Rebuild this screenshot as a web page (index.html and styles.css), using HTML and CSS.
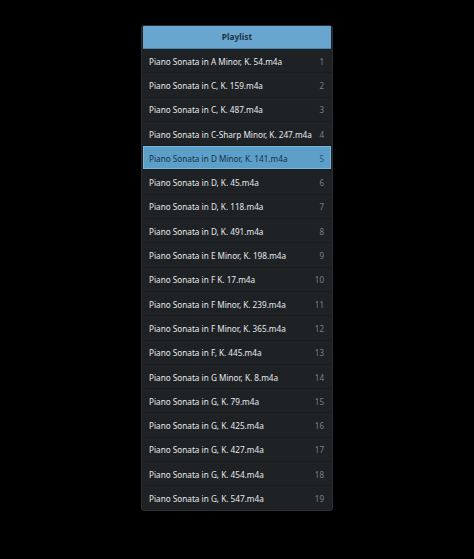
FILE: index.html
```html
<!DOCTYPE html>
<html lang="en">
<head>
  <meta charset="UTF-8" />
  <meta name="viewport" content="width=device-width, initial-scale=1.0"/>
  <title>Playlist</title>
  <link rel="stylesheet" href="styles.css">
</head>
<body>

  <!-- Playlist panel -->
  <div class="playlist">
    <div class="playlist-header">Playlist</div>
    <ul class="tracks">
      <li class="track"><span class="name">Piano Sonata in A Minor, K. 54.m4a</span><span class="num">1</span></li>
      <li class="track"><span class="name">Piano Sonata in C, K. 159.m4a</span><span class="num">2</span></li>
      <li class="track"><span class="name">Piano Sonata in C, K. 487.m4a</span><span class="num">3</span></li>
      <li class="track"><span class="name">Piano Sonata in C-Sharp Minor, K. 247.m4a</span><span class="num">4</span></li>
      <li class="track active"><span class="name">Piano Sonata in D Minor, K. 141.m4a</span><span class="num">5</span></li>
      <li class="track"><span class="name">Piano Sonata in D, K. 45.m4a</span><span class="num">6</span></li>
      <li class="track"><span class="name">Piano Sonata in D, K. 118.m4a</span><span class="num">7</span></li>
      <li class="track"><span class="name">Piano Sonata in D, K. 491.m4a</span><span class="num">8</span></li>
      <li class="track"><span class="name">Piano Sonata in E Minor, K. 198.m4a</span><span class="num">9</span></li>
      <li class="track"><span class="name">Piano Sonata in F K. 17.m4a</span><span class="num">10</span></li>
      <li class="track"><span class="name">Piano Sonata in F Minor, K. 239.m4a</span><span class="num">11</span></li>
      <li class="track"><span class="name">Piano Sonata in F Minor, K. 365.m4a</span><span class="num">12</span></li>
      <li class="track"><span class="name">Piano Sonata in F, K. 445.m4a</span><span class="num">13</span></li>
      <li class="track"><span class="name">Piano Sonata in G Minor, K. 8.m4a</span><span class="num">14</span></li>
      <li class="track"><span class="name">Piano Sonata in G, K. 79.m4a</span><span class="num">15</span></li>
      <li class="track"><span class="name">Piano Sonata in G, K. 425.m4a</span><span class="num">16</span></li>
      <li class="track"><span class="name">Piano Sonata in G, K. 427.m4a</span><span class="num">17</span></li>
      <li class="track"><span class="name">Piano Sonata in G, K. 454.m4a</span><span class="num">18</span></li>
      <li class="track"><span class="name">Piano Sonata in G, K. 547.m4a</span><span class="num">19</span></li>
    </ul>
  </div>

</body>
</html>
```

FILE: styles.css
```css
body {
  font-family: 'Noto Sans', 'Open Sans', sans-serif;
  background: #000;
  margin: 0;
  padding: 25px 0 0 141px;
  color: #e6e8ea;
}

.playlist {
  width: 190px;
  background: #1f2225;
  border: 1px solid #2c3034;
  border-radius: 3px;
  overflow: hidden;
}

.playlist-header {
  height: 22px;
  line-height: 22px;
  margin: 0 1px;
  text-align: center;
  font-size: 8.4px;
  font-weight: 700;
  color: #1d3447;
  background: #68a6cf;
  border-bottom: 1px solid #4d86ad;
}

.tracks {
  list-style: none;
  margin: 0;
  padding: 0;
}

.track {
  display: flex;
  align-items: center;
  justify-content: space-between;
  height: 22.3px;
  padding: 1px 8px 0 7px;
  font-size: 8.2px;
  white-space: nowrap;
  border-bottom: 1px solid #191b1e;
}

.track:last-child {
  border-bottom: none;
}

.track .num {
  color: #7b8086;
  font-size: 8px;
}

.track.active {
  background: #5c9fc8;
  color: #173247;
  margin: 0 1px;
  padding: 1px 7px 0 6px;
  box-shadow: inset 0 0 0 1px #79b6dc;
}

.track.active .num {
  color: #2e5773;
}
```
